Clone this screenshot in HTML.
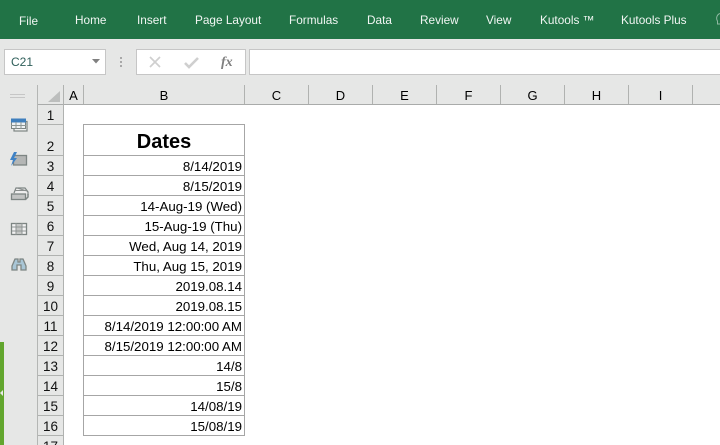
<!DOCTYPE html>
<html><head><meta charset="utf-8">
<style>
html,body{margin:0;padding:0}
body{width:720px;height:445px;overflow:hidden;position:relative;background:#fff;font-family:"Liberation Sans",sans-serif}
div{position:absolute;box-sizing:border-box}
.t{top:13px;color:#f1f6f3;font-size:11.8px;line-height:14px;white-space:nowrap}
.c{top:85px;height:20px;font-size:13px;line-height:21px;text-align:center;color:#000}
.v{top:85px;width:1px;height:19px;background:#b0b2b0}
.r{left:38px;width:26px;font-size:13.5px;text-align:center;color:#111;background:#e6e7e6;border-bottom:1px solid #b0b2b0;border-right:1px solid #b0b2b0;height:20px;line-height:21px}
.d{left:83px;width:162px;height:21px;border:1px solid #a6a6a6;background:#fff;text-align:right;padding-right:2px;font-size:13.3px;line-height:21px;color:#000;white-space:nowrap}
</style></head><body>
<div style="left:0;top:0;width:720px;height:39px;background:#217346"></div>
<div class="t" style="left:19px;top:14px">File</div>
<div class="t" style="left:75px">Home</div>
<div class="t" style="left:137px">Insert</div>
<div class="t" style="left:195px">Page Layout</div>
<div class="t" style="left:289px">Formulas</div>
<div class="t" style="left:367px">Data</div>
<div class="t" style="left:420px">Review</div>
<div class="t" style="left:486px">View</div>
<div class="t" style="left:540px">Kutools ™</div>
<div class="t" style="left:621px">Kutools Plus</div>
<svg style="position:absolute;left:716px;top:12px" width="4" height="15"><path d="M4 1.500A5 5 0 0 0 1.500 9V12H4" fill="none" stroke="#8fb8a2"/></svg>

<div style="left:0;top:39px;width:720px;height:406px;background:#e6e7e6"></div>
<div style="left:64px;top:105px;width:656px;height:340px;background:#fff"></div>
<div style="left:4px;top:49px;width:102px;height:26px;background:#fff;border:1px solid #c6c6c6"></div>
<div style="left:11px;top:55px;font-size:12px;line-height:14px;color:#2f5f5a">C21</div>
<svg style="position:absolute;left:92px;top:59px" width="8" height="5"><path d="M0 0H8L4 4.500Z" fill="#808080"/></svg>
<div style="left:120px;top:57px;width:2px;height:2px;background:#a8a8a8"></div>
<div style="left:120px;top:61px;width:2px;height:2px;background:#a8a8a8"></div>
<div style="left:120px;top:65px;width:2px;height:2px;background:#a8a8a8"></div>
<div style="left:136px;top:49px;width:110px;height:26px;background:#fff;border:1px solid #c6c6c6"></div>
<svg style="position:absolute;left:145px;top:54px" width="90" height="16">
<path d="M5 3L15 13M15 3L5 13" stroke="#cfcfcf" stroke-width="1.700" fill="none"/>
<path d="M40 9L44 13L53 4" stroke="#cfcfcf" stroke-width="2.600" fill="none"/>
<text x="76" y="12" font-family="Liberation Serif" font-style="italic" font-weight="bold" font-size="14" fill="#808080">fx</text>
</svg>
<div style="left:249px;top:49px;width:471px;height:26px;background:#fff;border:1px solid #c6c6c6;border-right:0"></div>

<!-- left sidebar -->
<div style="left:10px;top:94px;width:15px;height:1px;background:#c6c6c6"></div>
<div style="left:10px;top:97px;width:15px;height:1px;background:#c6c6c6"></div>
<svg style="position:absolute;left:8px;top:116px" width="22" height="160">
<!-- calendar -->
<rect x="6" y="5.500" width="13" height="9.500" fill="#f0f0f0" stroke="#7d8583" stroke-width="1.200"/>
<rect x="3.500" y="3" width="14" height="9.500" fill="#eef1f3" stroke="#7d8583"/>
<rect x="3" y="2.500" width="15" height="4" fill="#3f7fbd"/>
<path d="M3 9.500H18M8 6V13M13 6V13" stroke="#8d9694"/>
<!-- flash box -->
<rect x="5.500" y="39.500" width="13" height="9.500" fill="#b4b6b5" stroke="#7d8583" stroke-width="1.300"/>
<path d="M6 36L2 44H5L3 50L9 42H6L9 36Z" fill="#3f82c6"/>
<!-- stack -->
<path d="M6 77L8 72H17L20 76V79" fill="#eee" stroke="#7d8583" stroke-width="1.200"/>
<path d="M7 74.500H18M9 72L19 75" stroke="#8a8f8e"/>
<rect x="3.500" y="78" width="14" height="5.500" fill="#c2c4c3" stroke="#7d8583" stroke-width="1.300"/>
<path d="M17.500 83.500L20 81V78" fill="none" stroke="#7d8583" stroke-width="1.500"/>
<!-- table -->
<rect x="3.500" y="107.500" width="15" height="11" fill="#f3f3f3" stroke="#7d8583" stroke-width="1.300"/>
<rect x="8" y="108" width="6" height="10" fill="#c4c6c5"/>
<path d="M8 107V119M14 107V119M4 111H18M4 115H18" stroke="#8f9594"/>
<!-- binoculars -->
<path d="M4 154V150L7 143H10V146H12V143H15L18 150V154H13V149H9V154Z" fill="#a9c6d6" stroke="#7d8583" stroke-width="1.300"/>
</svg>
<div style="left:0;top:342px;width:4px;height:103px;background:#62a62e"></div>
<div style="left:0;top:390px;width:0;height:0;border:3px solid transparent;border-right-color:#e9e9e9;border-left:0"></div>
<div style="left:37px;top:85px;width:1px;height:360px;background:#b4b6b4"></div>

<!-- grid -->
<div style="left:38px;top:85px;width:682px;height:20px;background:#e6e7e6;border-bottom:1px solid #a9abaa"></div>
<svg style="position:absolute;left:48px;top:91px" width="12" height="11"><path d="M12 0V11H0Z" fill="#bcbebd"/></svg>
<div class="v" style="left:63px;height:20px"></div>
<div class="v" style="left:83px"></div>
<div class="v" style="left:244px"></div>
<div class="v" style="left:308px"></div>
<div class="v" style="left:372px"></div>
<div class="v" style="left:436px"></div>
<div class="v" style="left:500px"></div>
<div class="v" style="left:564px"></div>
<div class="v" style="left:628px"></div>
<div class="v" style="left:692px"></div>
<div class="c" style="left:64px;width:19px">A</div>
<div class="c" style="left:84px;width:160px">B</div>
<div class="c" style="left:245px;width:63px">C</div>
<div class="c" style="left:309px;width:63px">D</div>
<div class="c" style="left:373px;width:63px">E</div>
<div class="c" style="left:437px;width:63px">F</div>
<div class="c" style="left:501px;width:63px">G</div>
<div class="c" style="left:565px;width:63px">H</div>
<div class="c" style="left:629px;width:63px">I</div>

<div class="r" style="top:105px">1</div>
<div class="r" style="top:125px;height:31px;line-height:43px">2</div>
<div class="r" style="top:156px">3</div>
<div class="r" style="top:176px">4</div>
<div class="r" style="top:196px">5</div>
<div class="r" style="top:216px">6</div>
<div class="r" style="top:236px">7</div>
<div class="r" style="top:256px">8</div>
<div class="r" style="top:276px">9</div>
<div class="r" style="top:296px">10</div>
<div class="r" style="top:316px">11</div>
<div class="r" style="top:336px">12</div>
<div class="r" style="top:356px">13</div>
<div class="r" style="top:376px">14</div>
<div class="r" style="top:396px">15</div>
<div class="r" style="top:416px">16</div>
<div class="r" style="top:436px;height:9px;border-bottom:0;overflow:hidden">17</div>

<div class="d" style="top:124px;height:32px;text-align:center;font-weight:bold;font-size:20px;line-height:34px;padding:0">Dates</div>
<div class="d" style="top:155px">8/14/2019</div>
<div class="d" style="top:175px">8/15/2019</div>
<div class="d" style="top:195px">14-Aug-19 (Wed)</div>
<div class="d" style="top:215px">15-Aug-19 (Thu)</div>
<div class="d" style="top:235px">Wed, Aug 14, 2019</div>
<div class="d" style="top:255px">Thu, Aug 15, 2019</div>
<div class="d" style="top:275px">2019.08.14</div>
<div class="d" style="top:295px">2019.08.15</div>
<div class="d" style="top:315px">8/14/2019 12:00:00 AM</div>
<div class="d" style="top:335px">8/15/2019 12:00:00 AM</div>
<div class="d" style="top:355px">14/8</div>
<div class="d" style="top:375px">15/8</div>
<div class="d" style="top:395px">14/08/19</div>
<div class="d" style="top:415px">15/08/19</div>
</body></html>
